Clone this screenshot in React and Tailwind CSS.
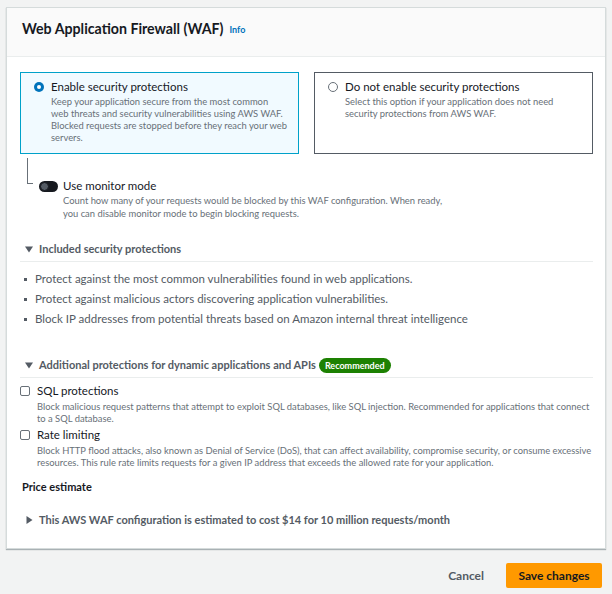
import { useState } from 'react'

const font = { fontFamily: 'Lato, "Liberation Sans", sans-serif' }

function Radio({ checked }) {
  return checked ? (
    <span className="mt-[3px] flex h-[10px] w-[10px] shrink-0 items-center justify-center rounded-full bg-[#0073bb]">
      <span className="h-[4px] w-[4px] rounded-full bg-white" />
    </span>
  ) : (
    <span className="mt-[3px] h-[10px] w-[10px] shrink-0 rounded-full border border-[#687078] bg-white" />
  )
}

function Checkbox() {
  return <span className="mt-[3px] h-[10px] w-[10px] shrink-0 rounded-[2px] border border-[#687078] bg-white" />
}

function Caret({ open }) {
  return (
    <svg width="8" height="8" viewBox="0 0 8 8" className="shrink-0 fill-[#545b64]">
      {open ? <path d="M0 1.5h8L4 7.5z" /> : <path d="M1.5 0v8l6-4z" />}
    </svg>
  )
}

// descriptions are given as an array of lines
function Lines({ lines, className }) {
  return (
    <p className={`whitespace-nowrap text-[9.4px] text-[#687078] ${className}`}>
      {lines.map((l, i) => (
        <span key={i}>
          {l}
          {i < lines.length - 1 && <br />}
        </span>
      ))}
    </p>
  )
}

function OptionCard({ selected, title, lines }) {
  return (
    <div
      className={`flex h-[82px] gap-[7px] border pl-[13px] pr-[4px] pt-[6px] ${
        selected ? 'border-[#00a1c9] bg-[#f1faff]' : 'border-[#545b64] bg-white'
      }`}
    >
      <Radio checked={selected} />
      <div>
        <div className="text-[11.5px] leading-[16px] text-[#16191f]">{title}</div>
        <Lines lines={lines} className="mt-[1px] leading-[12px]" />
      </div>
    </div>
  )
}

function SectionHeader({ children, badge, className = '' }) {
  return (
    <div className={`flex items-center gap-[6px] border-b border-[#eaeded] pb-[4px] pl-[5px] ${className}`}>
      <Caret open />
      <span className="text-[11px] font-bold leading-[16px] text-[#545b64]">{children}</span>
      {badge}
    </div>
  )
}

function CheckRow({ label, lines, className = '' }) {
  return (
    <div className={`flex gap-[7px] ${className}`}>
      <Checkbox />
      <div>
        <div className="text-[11.5px] leading-[16px] text-[#16191f]">{label}</div>
        <Lines lines={lines} className="mt-[2px] leading-[12px]" />
      </div>
    </div>
  )
}

export default function App() {
  const [monitor] = useState(false)
  const bullets = [
    'Protect against the most common vulnerabilities found in web applications.',
    'Protect against malicious actors discovering application vulnerabilities.',
    'Block IP addresses from potential threats based on Amazon internal threat intelligence',
  ]

  return (
    <div style={font} className="min-h-[594px] w-[612px] bg-[#f2f3f3] pt-[7px] text-[#16191f]">
      <div className="mx-[6px] border border-[#d5dbdb] bg-white shadow-[0_1px_1px_rgba(0,28,36,0.3)]">
        {/* header */}
        <div className="flex h-[49px] items-center gap-[6px] border-b border-[#eaeded] bg-[#fafafa] px-[15px] pb-[7px]">
          <h2 className="text-[14.2px] font-bold text-[#16191f]">Web Application Firewall (WAF)</h2>
          <span className="mt-[3px] text-[9px] font-bold text-[#0073bb]">Info</span>
        </div>

        {/* body */}
        <div className="pb-[20px] pl-[13px] pt-[15px]">
          <div className="grid grid-cols-[279px_279px] gap-[15px]">
            <OptionCard
              selected
              title="Enable security protections"
              lines={[
                'Keep your application secure from the most common',
                'web threats and security vulnerabilities using AWS WAF.',
                'Blocked requests are stopped before they reach your web',
                'servers.',
              ]}
            />
            <OptionCard
              title="Do not enable security protections"
              lines={['Select this option if your application does not need', 'security protections from AWS WAF.']}
            />
          </div>

          {/* monitor mode, hanging off the selected option */}
          <div className="flex">
            <div className="ml-[7px] mt-[4px] h-[26px] w-[6px] shrink-0 border-b border-l border-[#687078]" />
            <div className="ml-[6px] mt-[24px] flex gap-[5px]">
              <span
                className={`mt-[3px] flex h-[11px] w-[19px] shrink-0 items-center rounded-full px-[1px] ${
                  monitor ? 'justify-end bg-[#0073bb]' : 'justify-start bg-[#16191f]'
                }`}
              >
                <span className="h-[9px] w-[9px] rounded-full border-[1.5px] border-[#16191f] bg-[#545b64]" />
              </span>
              <div>
                <div className="text-[11.5px] leading-[16px] text-[#16191f]">Use monitor mode</div>
                <Lines
                  className="leading-[13px]"
                  lines={[
                    'Count how many of your requests would be blocked by this WAF configuration. When ready,',
                    'you can disable monitor mode to begin blocking requests.',
                  ]}
                />
              </div>
            </div>
          </div>

          <div className="pr-[12px]">
            <SectionHeader className="mt-[21px]">Included security protections</SectionHeader>
            <ul className="mt-[7px] flex flex-col">
              {bullets.map((b) => (
                <li key={b} className="flex items-center gap-[8px] pl-[4px] text-[11.5px] leading-[20px] text-[#545b64]">
                  <span className="h-[3px] w-[3px] shrink-0 bg-[#545b64]" />
                  {b}
                </li>
              ))}
            </ul>

            <SectionHeader
              className="mt-[28px]"
              badge={
                <span className="ml-[-3px] rounded-full bg-[#1d8102] px-[6px] text-[9px] font-bold leading-[15px] text-white">
                  Recommended
                </span>
              }
            >
              Additional protections for dynamic applications and APIs
            </SectionHeader>
            <CheckRow
              className="mt-[5px]"
              label="SQL protections"
              lines={[
                'Block malicious request patterns that attempt to exploit SQL databases, like SQL injection. Recommended for applications that connect',
                'to a SQL database.',
              ]}
            />
            <CheckRow
              className="mt-[2px]"
              label="Rate limiting"
              lines={[
                'Block HTTP flood attacks, also known as Denial of Service (DoS), that can affect availability, compromise security, or consume excessive',
                'resources. This rule rate limits requests for a given IP address that exceeds the allowed rate for your application.',
              ]}
            />

            <div className="ml-[2px] mt-[10px] text-[11px] font-bold leading-[16px] text-[#16191f]">
              Price estimate
            </div>
            <div className="mt-[17px] flex items-center gap-[6px] pl-[5px]">
              <Caret />
              <span className="text-[11px] font-bold leading-[16px] text-[#545b64]">
                This AWS WAF configuration is estimated to cost $14 for 10 million requests/month
              </span>
            </div>
          </div>
        </div>
      </div>

      {/* actions */}
      <div className="mt-[14px] flex items-center justify-end gap-[6px] pr-[10px]">
        <button type="button" className="px-[16px] text-[12px] font-bold text-[#545b64]">
          Cancel
        </button>
        <button
          type="button"
          className="h-[25px] w-[96px] rounded-[2px] bg-[#ff9900] text-[12px] font-bold text-[#16191f]"
        >
          Save changes
        </button>
      </div>
    </div>
  )
}
